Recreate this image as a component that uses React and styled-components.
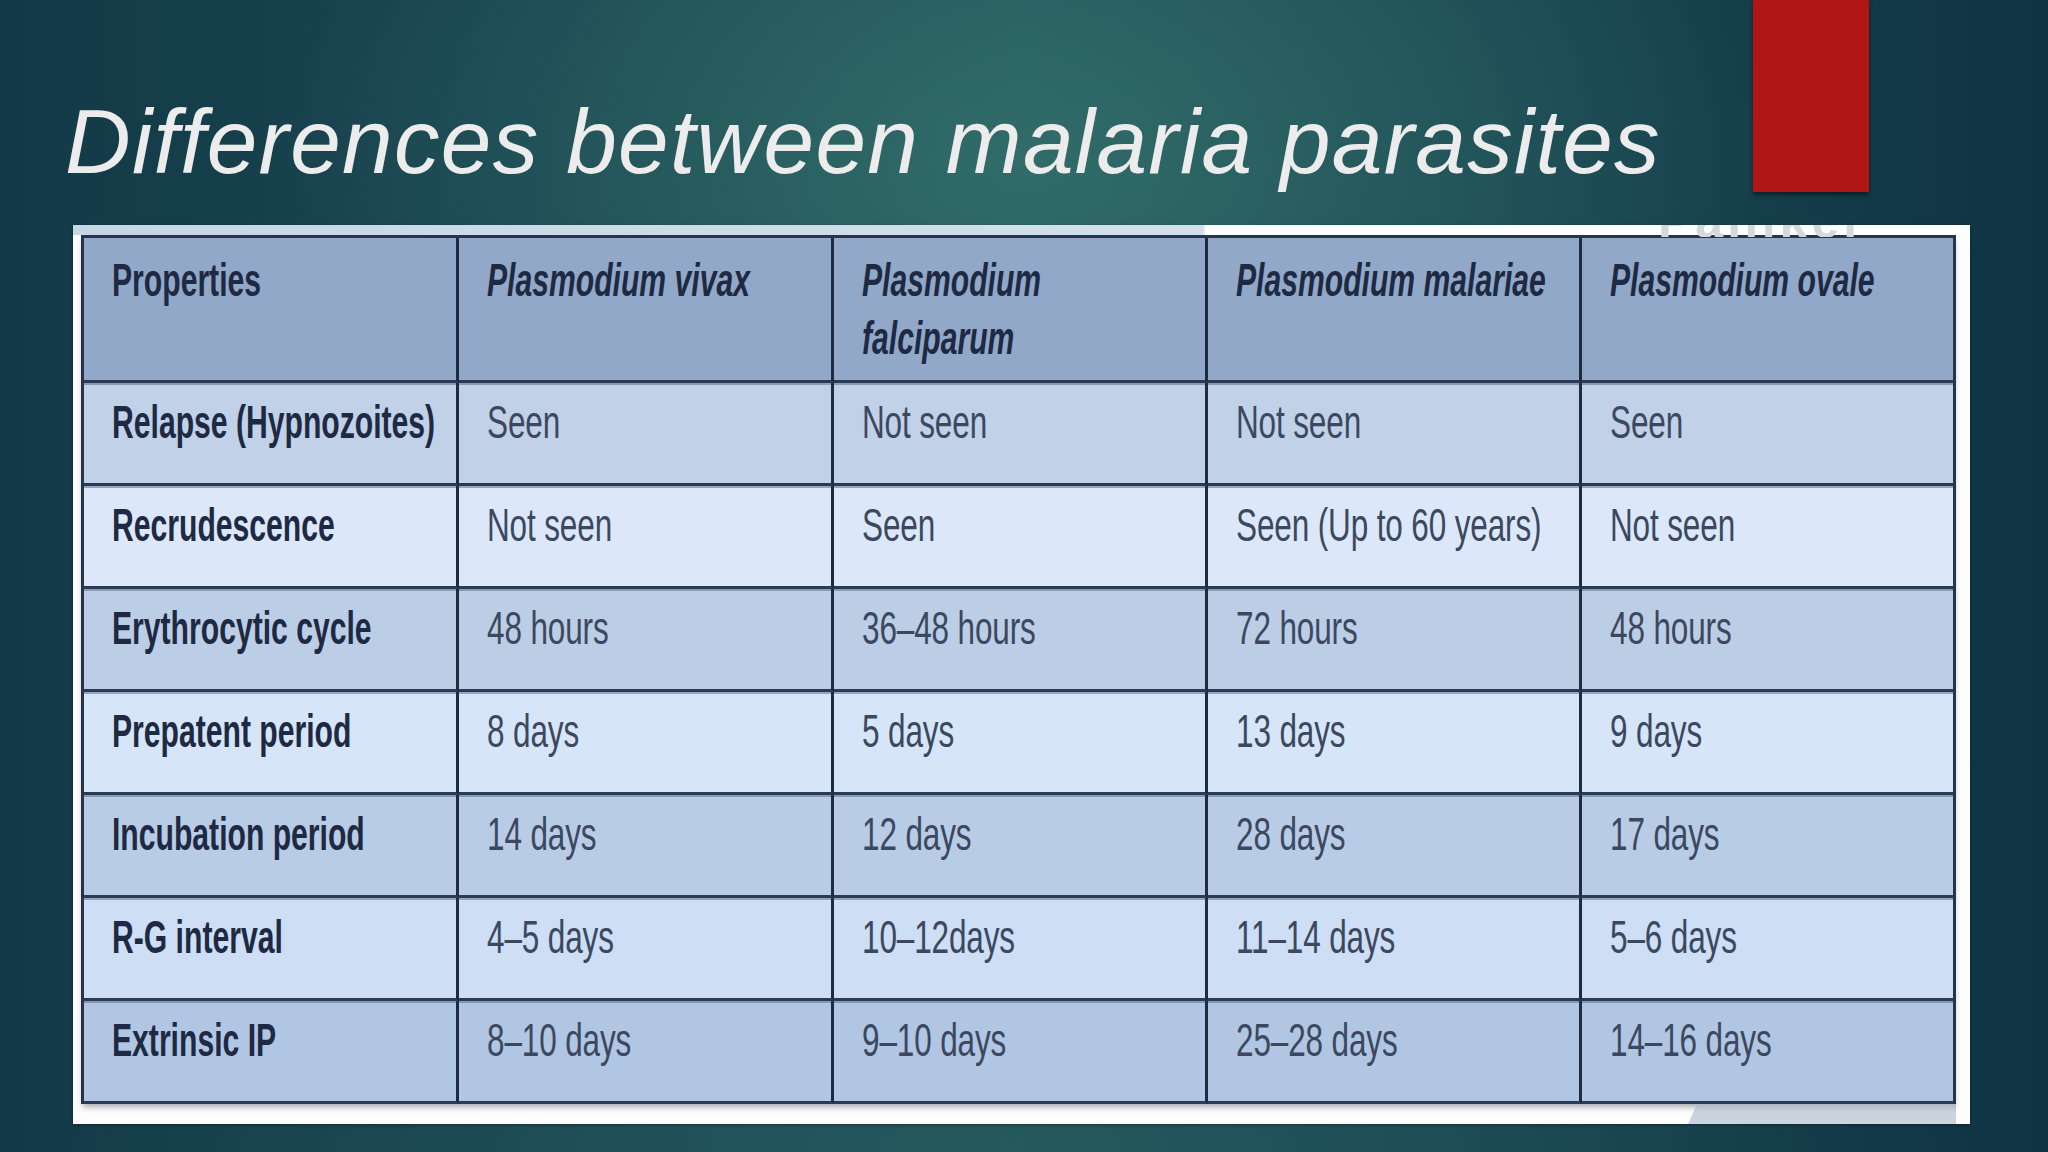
import React from "react";
import styled, { createGlobalStyle } from "styled-components";

const GlobalStyle = createGlobalStyle`
  html, body { margin: 0; padding: 0; background: #123a47; }
  * { box-sizing: border-box; }
`;

const Slide = styled.div`
  width: 2048px;
  height: 1152px;
  overflow: hidden;
  display: flex;
  flex-direction: column;
  background:
    radial-gradient(ellipse 760px 420px at 50% 14%, rgba(62, 128, 118, 0.55), rgba(62, 128, 118, 0) 100%),
    radial-gradient(ellipse 900px 600px at 45% 100%, rgba(40, 95, 98, 0.45), rgba(40, 95, 98, 0) 100%),
    linear-gradient(to right, #123947 0%, #1a4651 25%, #21545a 50%, #1a4852 72%, #0f3343 100%);
`;

const Header = styled.header`
  height: 225px;
  display: flex;
  align-items: flex-start;
  flex-shrink: 0;
`;

const Title = styled.h1`
  margin: 0;
  padding: 96px 0 0 65px;
  font-family: "Liberation Sans", Arial, sans-serif;
  font-style: italic;
  font-weight: 400;
  font-size: 91px;
  line-height: 91px;
  letter-spacing: 1.3px;
  color: #ececec;
  white-space: nowrap;
`;

const AccentBar = styled.div`
  width: 116px;
  height: 192px;
  margin-left: auto;
  margin-right: 179px;
  background: #b01616;
  box-shadow: 0 3px 4px rgba(0, 0, 0, 0.45);
  flex-shrink: 0;
`;

const Frame = styled.div`
  position: relative;
  margin-left: 73px;
  width: 1897px;
  height: 899px;
  padding: 10px 14px 20px 8px;
  background:
    linear-gradient(to right, #c6d6e5 0, #d3e0ec 1130px, #ffffff 1133px) top left / 100% 10px no-repeat,
    #fdfdfd;
  box-shadow: 0 1px 3px rgba(0, 0, 0, 0.35);
`;

const Ghost = styled.div`
  position: absolute;
  top: 0;
  left: 1585px;
  width: 200px;
  height: 12px;
  overflow: hidden;
  font-family: "Liberation Sans", Arial, sans-serif;
  font-weight: 700;
  font-size: 50px;
  line-height: 50px;
  color: #d6d8da;
  white-space: nowrap;

  & > span {
    display: block;
    margin-top: -29px;
    letter-spacing: 4px;
  }
`;

const Peek = styled.div`
  position: absolute;
  right: 14px;
  bottom: 0;
  width: 268px;
  height: 20px;
  background: linear-gradient(#aeb8c4, #c9d3de 40%, #ccd6e0);
  clip-path: polygon(9px 0, 100% 0, 100% 100%, 0 100%);
`;

const Grid = styled.div`
  display: grid;
  grid-template-columns: 375px 374.5px 374.5px 374px 1fr;
  grid-template-rows: 145px repeat(7, 103px);
  width: 1875px;
  border: 3px solid #26344e;
  border-bottom: none;
  box-shadow: 0 5px 6px -2px rgba(60, 70, 85, 0.45);
`;

const Cell = styled.div`
  background: ${(p) => p.$bg};
  border-right: ${(p) => (p.$last ? "none" : "3px solid #1f2b41")};
  border-bottom: 3px solid #2b3a55;
  padding: ${(p) => (p.$head ? "13px 10px 0 28px" : "10px 10px 0 28px")};
  box-shadow: ${(p) => (p.$head ? "none" : "inset 0 2px 0 rgba(95, 112, 140, 0.55)")};
  overflow: hidden;
`;

const Text = styled.span`
  display: block;
  width: ${(p) => 100 / p.$sx}%;
  transform: scaleX(${(p) => p.$sx});
  transform-origin: 0 0;
  font-family: "Liberation Sans", Arial, sans-serif;
  font-size: 46px;
  line-height: 58px;
  font-weight: ${(p) => (p.$bold ? 700 : 400)};
  font-style: ${(p) => (p.$italic ? "italic" : "normal")};
  color: ${(p) => (p.$bold ? "#1e2a43" : "#3b485f")};
  white-space: ${(p) => (p.$wrap ? "normal" : "nowrap")};
  letter-spacing: ${(p) => (p.$bold ? "0" : "-0.2px")};
`;

const headers = [
  { text: "Properties", italic: false },
  { text: "Plasmodium vivax", italic: true },
  { text: "Plasmodium falciparum", italic: true },
  { text: "Plasmodium malariae", italic: true },
  { text: "Plasmodium ovale", italic: true },
];

const rows = [
  { bg: "#c1d1e8", cells: ["Relapse (Hypnozoites)", "Seen", "Not seen", "Not seen", "Seen"] },
  { bg: "#dce8f9", cells: ["Recrudescence", "Not seen", "Seen", "Seen (Up to 60 years)", "Not seen"] },
  { bg: "#bccee6", cells: ["Erythrocytic cycle", "48 hours", "36–48 hours", "72 hours", "48 hours"] },
  { bg: "#d7e5f8", cells: ["Prepatent period", "8 days", "5 days", "13 days", "9 days"] },
  { bg: "#b9cce6", cells: ["Incubation period", "14 days", "12 days", "28 days", "17 days"] },
  { bg: "#cddef5", cells: ["R-G interval", "4–5 days", "10–12days", "11–14 days", "5–6 days"] },
  { bg: "#b1c6e3", cells: ["Extrinsic IP", "8–10 days", "9–10 days", "25–28 days", "14–16 days"] },
];

export default function App() {
  return (
    <>
      <GlobalStyle />
      <Slide>
        <Header>
          <Title>Differences between malaria parasites</Title>
          <AccentBar />
        </Header>
        <Frame>
          <Ghost>
            <span>Paniker</span>
          </Ghost>
          <Grid>
            {headers.map((h, i) => (
              <Cell key={h.text} $head $bg="#91a8c8" $last={i === 4}>
                <Text $bold $italic={h.italic} $sx={0.655} $wrap>
                  {h.text}
                </Text>
              </Cell>
            ))}
            {rows.map((r) =>
              r.cells.map((c, i) => (
                <Cell key={r.cells[0] + i} $bg={r.bg} $last={i === 4}>
                  <Text $bold={i === 0} $sx={i === 0 ? 0.655 : 0.685}>
                    {c}
                  </Text>
                </Cell>
              ))
            )}
          </Grid>
          <Peek />
        </Frame>
      </Slide>
    </>
  );
}
